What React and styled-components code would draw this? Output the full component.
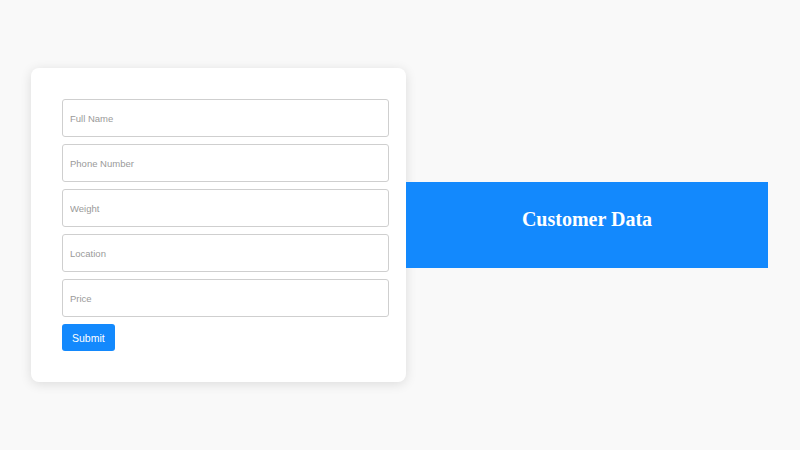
import styled, { createGlobalStyle } from "styled-components";

const fields = ["Full Name", "Phone Number", "Weight", "Location", "Price"];

const GlobalStyle = createGlobalStyle`
  body {
    margin: 0;
    background: #f9f9f9;
    font-family: "Liberation Sans", Arial, sans-serif;
  }
`;

const App = () => {
  return (
    <>
      <GlobalStyle />
      <Page>
        <FormCard onSubmit={(e) => e.preventDefault()}>
          {fields.map((field) => (
            <Input key={field} placeholder={field} />
          ))}
          <SubmitButton type="submit">Submit</SubmitButton>
        </FormCard>
        <Banner>
          <Title>Customer Data</Title>
        </Banner>
      </Page>
    </>
  );
};

const Page = styled.div`
  display: flex;
  align-items: center;
  height: 450px;
  padding: 0 32px 0 31px;
  box-sizing: border-box;
`;

const FormCard = styled.form`
  display: flex;
  flex-direction: column;
  align-items: flex-start;
  gap: 7px;
  width: 375px;
  box-sizing: border-box;
  padding: 31px 17px 31px 31px;
  background: white;
  border-radius: 8px;
  box-shadow: 0 2px 12px rgba(0, 0, 0, 0.12);
`;

const Input = styled.input`
  width: 100%;
  height: 38px;
  box-sizing: border-box;
  padding: 0 7px;
  border: 1px solid #cfcfcf;
  border-radius: 3px;
  font-family: "Liberation Sans", Arial, sans-serif;
  font-size: 9.5px;
  color: #333;

  &::placeholder {
    color: #9a9a9a;
  }
`;

const SubmitButton = styled.button`
  height: 27px;
  padding: 0 10px;
  border: none;
  border-radius: 3px;
  background: #1389fd;
  color: white;
  font-family: "Liberation Sans", Arial, sans-serif;
  font-size: 10.5px;
  cursor: pointer;
`;

const Banner = styled.div`
  flex: 1;
  height: 86px;
  box-sizing: border-box;
  padding-bottom: 12px;
  display: flex;
  align-items: center;
  justify-content: center;
  background: #1389fd;
`;

const Title = styled.h2`
  margin: 0;
  font-family: "Liberation Serif", "Times New Roman", serif;
  font-size: 20px;
  font-weight: bold;
  color: white;
`;

export default App;
